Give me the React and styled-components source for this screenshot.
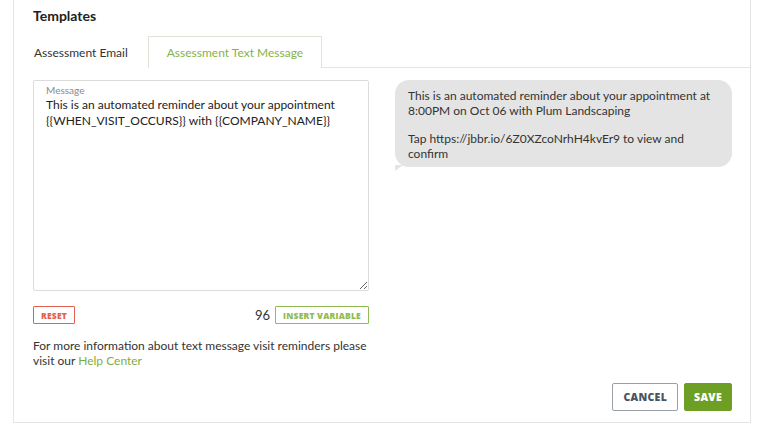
import React, { useState } from "react";
import styled, { createGlobalStyle } from "styled-components";

const GlobalStyle = createGlobalStyle`
  body {
    margin: 0;
    background: #ffffff;
    font-family: Lato, "Open Sans", sans-serif;
    color: #333;
  }
`;

const Card = styled.div`
  box-sizing: border-box;
  margin: -1px 0 0 13px;
  width: 738px;
  border: 1px solid #e4e4e4;
  border-top: none;
  background: #fff;
`;

const Header = styled.h2`
  margin: 0;
  height: 37px;
  display: flex;
  align-items: center;
  padding: 0 19px 4px;
  box-sizing: border-box;
  font-size: 14px;
  font-weight: 700;
  color: #222;
`;

const TabBar = styled.div`
  display: flex;
  height: 32px;
  border-bottom: 1px solid #e4e4e4;
  box-sizing: border-box;
`;

const Tab = styled.button`
  all: unset;
  box-sizing: border-box;
  height: 32px;
  padding: 0 ${(p) => (p.$active ? "18px" : "19px")};
  display: flex;
  align-items: center;
  font-family: Lato, sans-serif;
  font-size: 12px;
  color: ${(p) => (p.$active ? "#86b24a" : "#333")};
  background: #fff;
  border: 1px solid ${(p) => (p.$active ? "#dfe5d6" : "transparent")};
  border-bottom: none;
  margin-bottom: ${(p) => (p.$active ? "-1px" : "0")};
  cursor: pointer;
`;

const Body = styled.div`
  display: grid;
  grid-template-columns: 336px 337px;
  column-gap: 26px;
  padding: 12px 18px 0 19px;
`;

const Column = styled.div`
  display: flex;
  flex-direction: column;
`;

const Field = styled.div`
  height: 211px;
  box-sizing: border-box;
  border: 1px solid #dcdcdc;
  border-radius: 2px;
  display: flex;
  flex-direction: column;
  padding: 3px 0 0 12px;
`;

const Label = styled.span`
  font-size: 10px;
  color: #8a8a8a;
  line-height: 13px;
`;

const TextArea = styled.textarea`
  flex: 1;
  border: none;
  outline: none;
  resize: vertical;
  padding: 0 4px 0 0;
  margin: 0;
  font-family: Lato, sans-serif;
  font-size: 12px;
  line-height: 16px;
  color: #222;
`;

const Controls = styled.div`
  display: flex;
  align-items: center;
  margin-top: 15px;
  height: 18px;
`;

const OutlineButton = styled.button`
  box-sizing: border-box;
  height: 18px;
  padding: 0 7px;
  background: #fff;
  border: 1px solid ${(p) => p.$color};
  color: ${(p) => p.$color};
  font-family: "Open Sans", sans-serif;
  font-weight: 800;
  font-size: 8.5px;
  letter-spacing: 0.2px;
  border-radius: 1px;
  cursor: pointer;
`;

const Count = styled.span`
  margin: 0 5px 0 auto;
  font-size: 13px;
  color: #333;
`;

const Note = styled.p`
  margin: 14px 0 0;
  font-size: 12px;
  line-height: 15px;
  color: #333;
`;

const Link = styled.a`
  color: #7fae3f;
  text-decoration: none;
`;

const Bubble = styled.div`
  position: relative;
  align-self: start;
  background: #e4e4e4;
  border-radius: 14px;
  padding: 8px 14px 6px 13px;
  font-size: 12px;
  line-height: 15px;
  color: #333;

  p {
    margin: 0 0 13px;
  }
  p:last-child {
    margin-bottom: 0;
  }

  &::after {
    content: "";
    position: absolute;
    left: 0;
    bottom: -4px;
    width: 0;
    height: 0;
    border-top: 6px solid #e4e4e4;
    border-right: 8px solid transparent;
  }
`;

const Footer = styled.div`
  display: flex;
  justify-content: flex-end;
  gap: 6px;
  padding: 15px 18px 11px;
`;

const ActionButton = styled.button`
  box-sizing: border-box;
  height: 28px;
  padding: 0 ${(p) => (p.$primary ? "9px" : "10px")};
  border-radius: 2px;
  border: 1px solid ${(p) => (p.$primary ? "#6c9f23" : "#9aa0a6")};
  background: ${(p) => (p.$primary ? "#6c9f23" : "#fff")};
  color: ${(p) => (p.$primary ? "#fff" : "#4c535c")};
  font-family: "Open Sans", sans-serif;
  font-weight: 800;
  font-size: 10.5px;
  letter-spacing: 0.3px;
  cursor: pointer;
`;

export default function App() {
  const [tab, setTab] = useState("text");
  const [message, setMessage] = useState(
    "This is an automated reminder about your appointment {{WHEN_VISIT_OCCURS}} with {{COMPANY_NAME}}"
  );

  return (
    <>
      <GlobalStyle />
      <Card>
        <Header>Templates</Header>
        <TabBar>
          <Tab $active={tab === "email"} onClick={() => setTab("email")}>
            Assessment Email
          </Tab>
          <Tab $active={tab === "text"} onClick={() => setTab("text")}>
            Assessment Text Message
          </Tab>
        </TabBar>
        <Body>
          <Column>
            <Field>
              <Label>Message</Label>
              <TextArea
                value={message}
                onChange={(e) => setMessage(e.target.value)}
              />
            </Field>
            <Controls>
              <OutlineButton $color="#e4604f">RESET</OutlineButton>
              <Count>96</Count>
              <OutlineButton $color="#8fbb55">INSERT VARIABLE</OutlineButton>
            </Controls>
            <Note>
              For more information about text message visit reminders please
              visit our <Link href="#">Help Center</Link>
            </Note>
          </Column>
          <Bubble>
            <p>
              This is an automated reminder about your appointment at 8:00PM on
              Oct 06 with Plum Landscaping
            </p>
            <p>Tap https://jbbr.io/6Z0XZcoNrhH4kvEr9 to view and confirm</p>
          </Bubble>
        </Body>
        <Footer>
          <ActionButton>CANCEL</ActionButton>
          <ActionButton $primary>SAVE</ActionButton>
        </Footer>
      </Card>
    </>
  );
}
